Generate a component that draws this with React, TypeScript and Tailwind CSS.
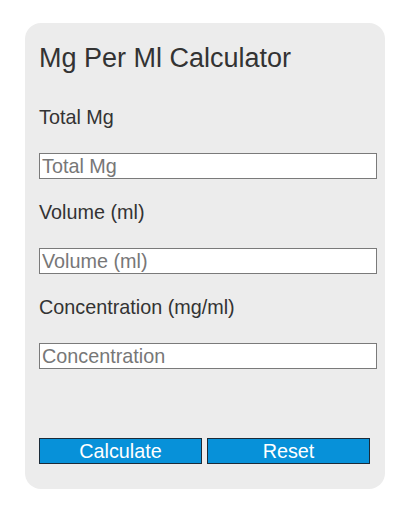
import React from 'react';

const fields = [
    { label: 'Total Mg', placeholder: 'Total Mg' },
    { label: 'Volume (ml)', placeholder: 'Volume (ml)' },
    { label: 'Concentration (mg/ml)', placeholder: 'Concentration' },
];

export default function App() {
    return (
        <div className="min-h-screen bg-white pt-[23px] pl-[25px] font-['Liberation_Sans',Arial,sans-serif]">
            <div className="w-[360px] h-[466px] rounded-[16px] bg-[#ececec] pt-[20px] pl-[14px] pr-[8px] flex flex-col text-[#333]">
                {/* Titulo */}
                <h1 className="text-[27px] leading-[31px] font-normal">Mg Per Ml Calculator</h1>

                <div className="mt-[32px] flex flex-col">
                    {fields.map((f, i) => (
                        <div key={f.label} className={i > 0 ? 'mt-[22px]' : ''}>
                            <label className="block text-[19.8px] leading-[23px]">{f.label}</label>
                            <input
                                type="text"
                                placeholder={f.placeholder}
                                className="mt-[24px] block w-[338px] h-[26px] bg-white border border-[#7a7a7a] px-[2px] text-[19.8px] leading-[24px] text-[#333] placeholder:text-[#777] outline-none"
                            />
                        </div>
                    ))}
                </div>

                {/* Botones */}
                <div className="mt-[69px] flex gap-[5px]">
                    <button className="w-[163px] h-[26px] bg-[#0791d9] border border-[#1b2b38] text-white text-[19.8px] leading-[24px]">
                        Calculate
                    </button>
                    <button className="w-[163px] h-[26px] bg-[#0791d9] border border-[#1b2b38] text-white text-[19.8px] leading-[24px]">
                        Reset
                    </button>
                </div>
            </div>
        </div>
    );
}
